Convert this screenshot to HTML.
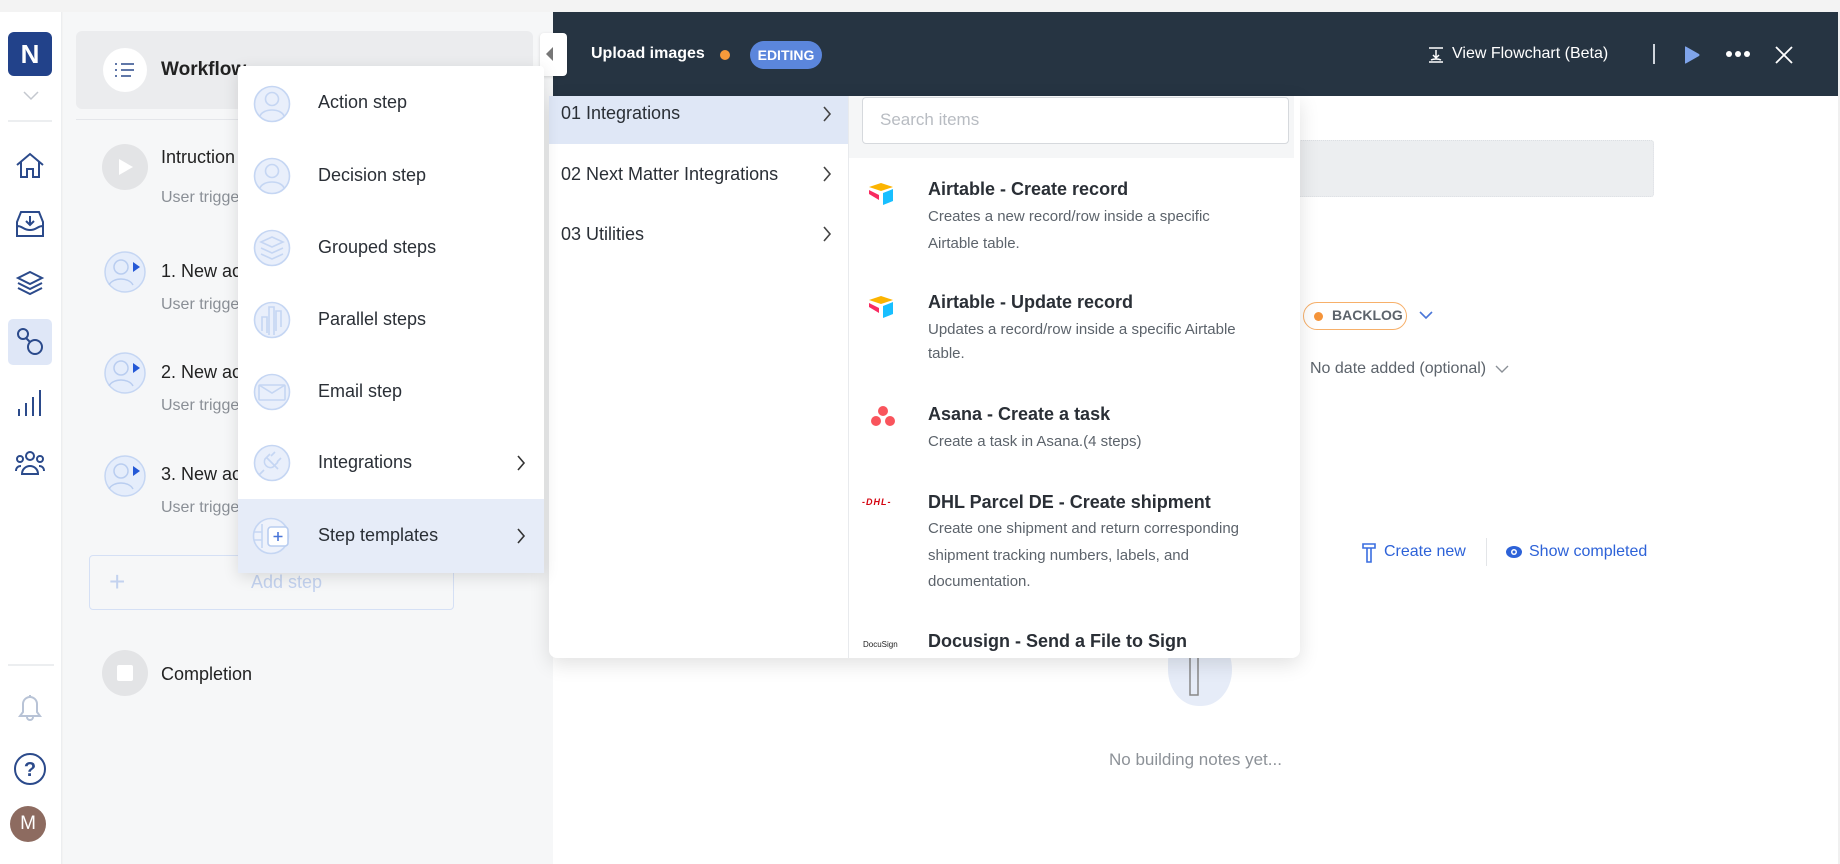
<!DOCTYPE html>
<html><head><meta charset="utf-8"><style>
*{box-sizing:border-box;margin:0;padding:0}
body{width:1840px;height:864px;overflow:hidden;background:#f3f3f3;font-family:"Liberation Sans",Arial,sans-serif;position:relative;color:#2a2f36}
.a{position:absolute}
.t{position:absolute;white-space:nowrap}
</style></head><body>
<!-- sidebar -->
<div class="a" style="left:0;top:12px;width:62px;height:852px;background:#fff;border-right:1px solid #eceef0"></div>
<div class="a" style="left:8px;top:32px;width:44px;height:44px;border-radius:6px;background:#22428a;color:#fff;font-weight:bold;font-size:26px;text-align:center;line-height:44px">N</div>
<svg class="a" style="left:22px;top:90px" width="18" height="12"><path d="M2 2l7 7 7-7" stroke="#c4c8cf" stroke-width="1.5" fill="none"/></svg>
<div class="a" style="left:8px;top:120px;width:44px;height:2px;background:#eceef0"></div>
<svg class="a" style="left:14px;top:150px" width="32" height="32" fill="none" stroke="#2b4a8b" stroke-width="2"><path d="M3 15L16 4l13 11M7 12v15h6v-8h6v8h6V12"/></svg>
<svg class="a" style="left:14px;top:208px" width="32" height="32" fill="none" stroke="#2b4a8b" stroke-width="2"><path d="M3 28V14l4-10h18l4 10v14zM3 18c6 0 6 4 13 4s7-4 13-4M16 8v9M12 13l4 4 4-4"/></svg>
<svg class="a" style="left:14px;top:267px" width="32" height="32" fill="none" stroke="#2b4a8b" stroke-width="2"><path d="M16 5l12 6-12 6-12-6zM4 16l12 6 12-6M4 21l12 6 12-6"/></svg>
<div class="a" style="left:8px;top:319px;width:44px;height:46px;border-radius:5px;background:#dfe7f7"></div>
<svg class="a" style="left:14px;top:325px" width="32" height="34" fill="none" stroke="#2b4a8b" stroke-width="2"><circle cx="9" cy="9" r="5"/><circle cx="21" cy="22" r="7"/><path d="M12 13l4 4"/></svg>
<svg class="a" style="left:16px;top:388px" width="28" height="30" fill="none" stroke="#2b4a8b" stroke-width="2"><path d="M3 28v-7M10 28V15M17 28V9M24 28V2"/></svg>
<svg class="a" style="left:13px;top:450px" width="34" height="26" fill="none" stroke="#2b4a8b" stroke-width="2"><circle cx="17" cy="6" r="4"/><circle cx="7" cy="9" r="3"/><circle cx="27" cy="9" r="3"/><path d="M9 24c0-5 4-8 8-8s8 3 8 8zM3 21c0-3 2-5 5-5M31 21c0-3-2-5-5-5"/></svg>
<div class="a" style="left:8px;top:664px;width:46px;height:2px;background:#eceef0"></div>
<svg class="a" style="left:16px;top:692px" width="28" height="32" fill="none" stroke="#b8c3d6" stroke-width="2"><path d="M4 24h20l-3-4V12a7 7 0 0 0-14 0v8zM11 25a3 3 0 0 0 6 0M14 3v2"/></svg>
<svg class="a" style="left:13px;top:752px" width="34" height="34" fill="none" stroke="#2b4a8b" stroke-width="2"><circle cx="17" cy="17" r="15"/><text x="17" y="24" font-size="20" font-weight="bold" fill="#2b4a8b" stroke="none" text-anchor="middle" font-family="Liberation Sans">?</text></svg>
<div class="a" style="left:10px;top:806px;width:36px;height:36px;border-radius:50%;background:#8d6b60;color:#fff;font-size:19px;text-align:center;line-height:36px">M</div>

<!-- left panel -->
<div class="a" style="left:63px;top:12px;width:490px;height:852px;background:#f6f7f8"></div>
<div class="a" style="left:76px;top:31px;width:457px;height:78px;border-radius:6px;background:#ebecee"></div>
<div class="a" style="left:76px;top:119px;width:457px;height:1px;background:#e4e6ea"></div>
<div class="a" style="left:103px;top:48px;width:44px;height:44px;border-radius:50%;background:#fff"></div>
<svg class="a" style="left:114px;top:61px" width="22" height="18" fill="none" stroke="#2b4a8b" stroke-width="1.6"><path d="M1 3h2M7 3h13M1 9h2M7 9h13M1 15h2M7 15h10"/></svg>
<div class="t" style="left:161px;top:59px;font-size:19px;font-weight:bold;color:#222">Workflow</div>

<div class="a" style="left:102px;top:144px;width:46px;height:46px;border-radius:50%;background:#e3e4e6"></div>
<svg class="a" style="left:117px;top:157px" width="18" height="20"><path d="M2 2l14 8-14 8z" fill="#fff"/></svg>
<div class="t" style="left:161px;top:147px;font-size:18px;color:#222">Intruction</div>
<div class="t" style="left:161px;top:189px;font-size:16px;color:#8a8f96">User trigge</div>

<svg class="a" style="left:104px;top:251px" width="44" height="44"><circle cx="21" cy="21" r="20" fill="#e5edfb" stroke="#c5d6f3" stroke-width="1.5"/><circle cx="17" cy="16" r="7" fill="none" stroke="#b9cdf0" stroke-width="1.5"/><path d="M5 34c4-8 20-8 24 0" fill="none" stroke="#b9cdf0" stroke-width="1.5"/><path d="M29 11l7 5-7 5z" fill="#2458d6"/></svg>
<div class="t" style="left:161px;top:261px;font-size:18px;color:#222">1. New ac</div>
<div class="t" style="left:161px;top:296px;font-size:16px;color:#8a8f96">User trigge</div>
<svg class="a" style="left:104px;top:352px" width="44" height="44"><circle cx="21" cy="21" r="20" fill="#e5edfb" stroke="#c5d6f3" stroke-width="1.5"/><circle cx="17" cy="16" r="7" fill="none" stroke="#b9cdf0" stroke-width="1.5"/><path d="M5 34c4-8 20-8 24 0" fill="none" stroke="#b9cdf0" stroke-width="1.5"/><path d="M29 11l7 5-7 5z" fill="#2458d6"/></svg>
<div class="t" style="left:161px;top:362px;font-size:18px;color:#222">2. New ac</div>
<div class="t" style="left:161px;top:397px;font-size:16px;color:#8a8f96">User trigge</div>
<svg class="a" style="left:104px;top:455px" width="44" height="44"><circle cx="21" cy="21" r="20" fill="#e5edfb" stroke="#c5d6f3" stroke-width="1.5"/><circle cx="17" cy="16" r="7" fill="none" stroke="#b9cdf0" stroke-width="1.5"/><path d="M5 34c4-8 20-8 24 0" fill="none" stroke="#b9cdf0" stroke-width="1.5"/><path d="M29 11l7 5-7 5z" fill="#2458d6"/></svg>
<div class="t" style="left:161px;top:464px;font-size:18px;color:#222">3. New ac</div>
<div class="t" style="left:161px;top:499px;font-size:16px;color:#8a8f96">User trigge</div>

<div class="a" style="left:89px;top:555px;width:365px;height:55px;border:1.5px solid #d5e0f5;border-radius:4px"></div>
<div class="t" style="left:109px;top:566px;font-size:28px;color:#c3d2ef;font-weight:300">+</div>
<div class="t" style="left:251px;top:572px;font-size:18px;color:#c3d2ef">Add step</div>

<div class="a" style="left:102px;top:650px;width:46px;height:46px;border-radius:50%;background:#e3e4e6"></div>
<div class="a" style="left:117px;top:665px;width:16px;height:16px;border-radius:2px;background:#fff"></div>
<div class="t" style="left:161px;top:664px;font-size:18px;color:#222">Completion</div>

<!-- header -->
<div class="a" style="left:553px;top:12px;width:1285px;height:84px;background:#263442"></div>
<div class="a" style="left:553px;top:96px;width:1285px;height:768px;background:#fff"></div>
<div class="a" style="left:1838px;top:12px;width:2px;height:852px;background:#f0f0f0"></div>
<div class="a" style="left:540px;top:33px;width:27px;height:43px;background:#fff;border-radius:4px;box-shadow:0 1px 3px rgba(0,0,0,.15)"></div>
<svg class="a" style="left:545px;top:46px" width="10" height="16"><path d="M8 1L1 8l7 7z" fill="#777"/></svg>
<div class="t" style="left:591px;top:45px;font-size:16px;font-weight:bold;color:#fff">Upload images</div>
<div class="a" style="left:720px;top:50px;width:10px;height:10px;border-radius:50%;background:#f59a3b"></div>
<div class="a" style="left:750px;top:41px;width:72px;height:28px;border-radius:14px;background:#5b86dc;color:#fff;font-size:14px;font-weight:bold;text-align:center;line-height:28px">EDITING</div>
<svg class="a" style="left:1427px;top:46px" width="18" height="18" fill="none" stroke="#fff" stroke-width="1.5"><path d="M2 2h14M2 16h14M9 4v8M6 9l3 3 3-3M4 14c2-1 3-1 5-1s3 0 5 1"/></svg>
<div class="t" style="left:1452px;top:45px;font-size:16px;color:#fff">View Flowchart (Beta)</div>
<div class="a" style="left:1653px;top:44px;width:2px;height:20px;background:#cfd5dc"></div>
<svg class="a" style="left:1683px;top:46px" width="18" height="18"><path d="M2 1q0-1 1-.4l13 7.4q1 1 0 2L3 17.4q-1 .6-1-.4z" fill="#7fa4ea"/></svg>
<div class="a" style="left:1726px;top:51px;width:6px;height:6px;border-radius:50%;background:#fff"></div>
<div class="a" style="left:1735px;top:51px;width:6px;height:6px;border-radius:50%;background:#fff"></div>
<div class="a" style="left:1744px;top:51px;width:6px;height:6px;border-radius:50%;background:#fff"></div>
<svg class="a" style="left:1774px;top:45px" width="20" height="20" stroke="#fff" stroke-width="1.8"><path d="M2 2l16 16M18 2L2 18"/></svg>

<!-- main content -->
<div class="a" style="left:1200px;top:140px;width:454px;height:57px;background:#eceef0;border:1px dotted #dcdfe3;border-radius:3px"></div>
<div class="a" style="left:1303px;top:302px;width:104px;height:28px;border:1.5px solid #f7b06a;border-radius:14px"></div>
<div class="a" style="left:1314px;top:312px;width:9px;height:9px;border-radius:50%;background:#f5943a"></div>
<div class="t" style="left:1332px;top:307px;font-size:14px;font-weight:bold;color:#5c636b">BACKLOG</div>
<svg class="a" style="left:1418px;top:310px" width="16" height="10" fill="none" stroke="#4a76d8" stroke-width="1.6"><path d="M2 2l6 6 6-6"/></svg>
<div class="t" style="left:1310px;top:360px;font-size:16px;color:#5c636b">No date added (optional)</div>
<svg class="a" style="left:1494px;top:364px" width="16" height="10" fill="none" stroke="#8a8f96" stroke-width="1.4"><path d="M2 2l6 6 6-6"/></svg>
<svg class="a" style="left:1362px;top:542px" width="14" height="22" fill="none" stroke="#3a6ee0" stroke-width="1.6"><path d="M1 2h12v4H1zM5 6v14h4V6"/></svg>
<div class="t" style="left:1384px;top:543px;font-size:16px;color:#2d62d8">Create new</div>
<div class="a" style="left:1486px;top:538px;width:1px;height:28px;background:#e3e5e8"></div>
<svg class="a" style="left:1505px;top:545px" width="18" height="14"><ellipse cx="9" cy="7" rx="8" ry="6" fill="#2d62d8"/><circle cx="9" cy="7" r="3" fill="#fff"/><circle cx="9" cy="7" r="1.5" fill="#2d62d8"/></svg>
<div class="t" style="left:1529px;top:543px;font-size:16px;color:#2d62d8">Show completed</div>
<div class="a" style="left:1168px;top:630px;width:64px;height:76px;border-radius:45% 55% 50% 50%;background:#e6ecf8"></div>
<svg class="a" style="left:1184px;top:655px" width="20" height="42" fill="none" stroke="#888" stroke-width="1.5"><path d="M6 0v40h8V0"/></svg>
<div class="t" style="left:1109px;top:750px;font-size:17px;color:#8d9298">No building notes yet...</div>

<!-- integrations dropdown -->
<div class="a" style="left:549px;top:96px;width:751px;height:562px;background:#fff;border-radius:0 0 8px 8px;box-shadow:0 6px 20px rgba(0,0,0,.12)"></div>
<div class="a" style="left:549px;top:96px;width:299px;height:48px;background:#dfe7f6"></div>
<div class="a" style="left:848px;top:96px;width:1px;height:562px;background:#e8eaed"></div>
<div class="t" style="left:561px;top:103px;font-size:18px;color:#2a2f36">01 Integrations</div>
<div class="t" style="left:561px;top:164px;font-size:18px;color:#2a2f36">02 Next Matter Integrations</div>
<div class="t" style="left:561px;top:224px;font-size:18px;color:#2a2f36">03 Utilities</div>
<svg class="a" style="left:822px;top:105px" width="10" height="18" fill="none" stroke="#444" stroke-width="1.6"><path d="M2 2l6 7-6 7"/></svg>
<svg class="a" style="left:822px;top:165px" width="10" height="18" fill="none" stroke="#444" stroke-width="1.6"><path d="M2 2l6 7-6 7"/></svg>
<svg class="a" style="left:822px;top:225px" width="10" height="18" fill="none" stroke="#444" stroke-width="1.6"><path d="M2 2l6 7-6 7"/></svg>
<div class="a" style="left:849px;top:96px;width:445px;height:62px;background:#f5f6f7"></div>
<div class="a" style="left:862px;top:97px;width:427px;height:47px;background:#fff;border:1px solid #d6d9dd;border-radius:4px"></div>
<div class="t" style="left:880px;top:110px;font-size:17px;color:#b8bcc2">Search items</div>

<svg class="a" style="left:868px;top:182px" width="28" height="24"><path d="M13 1l12 4-12 4L1 5z" fill="#fcb400"/><path d="M15 11l10-4v12l-10 4z" fill="#18bfff"/><path d="M1 8l10 5v5L1 12z" fill="#f82b60"/></svg>
<div class="t" style="left:928px;top:179px;font-size:18px;font-weight:bold;color:#2a2f36">Airtable - Create record</div>
<div class="t" style="left:928px;top:208px;font-size:15px;color:#5c636b">Creates a new record/row inside a specific</div>
<div class="t" style="left:928px;top:235px;font-size:15px;color:#5c636b">Airtable table.</div>
<svg class="a" style="left:868px;top:295px" width="28" height="24"><path d="M13 1l12 4-12 4L1 5z" fill="#fcb400"/><path d="M15 11l10-4v12l-10 4z" fill="#18bfff"/><path d="M1 8l10 5v5L1 12z" fill="#f82b60"/></svg>
<div class="t" style="left:928px;top:292px;font-size:18px;font-weight:bold;color:#2a2f36">Airtable - Update record</div>
<div class="t" style="left:928px;top:321px;font-size:15px;color:#5c636b">Updates a record/row inside a specific Airtable</div>
<div class="t" style="left:928px;top:345px;font-size:15px;color:#5c636b">table.</div>
<svg class="a" style="left:870px;top:405px" width="26" height="24"><circle cx="13" cy="6" r="5" fill="#f9545c"/><circle cx="6" cy="16" r="5" fill="#f9545c"/><circle cx="20" cy="16" r="5" fill="#f9545c"/></svg>
<div class="t" style="left:928px;top:404px;font-size:18px;font-weight:bold;color:#2a2f36">Asana - Create a task</div>
<div class="t" style="left:928px;top:433px;font-size:15px;color:#5c636b">Create a task in Asana.(4 steps)</div>
<div class="t" style="left:862px;top:497px;font-size:9px;font-weight:bold;font-style:italic;color:#d40511;letter-spacing:1px">-DHL-</div>
<div class="t" style="left:928px;top:492px;font-size:18px;font-weight:bold;color:#2a2f36">DHL Parcel DE - Create shipment</div>
<div class="t" style="left:928px;top:520px;font-size:15px;color:#5c636b">Create one shipment and return corresponding</div>
<div class="t" style="left:928px;top:547px;font-size:15px;color:#5c636b">shipment tracking numbers, labels, and</div>
<div class="t" style="left:928px;top:573px;font-size:15px;color:#5c636b">documentation.</div>
<div class="t" style="left:863px;top:640px;font-size:8px;color:#222">DocuSign</div>
<div class="t" style="left:928px;top:631px;font-size:18px;font-weight:bold;color:#2a2f36">Docusign - Send a File to Sign</div>

<!-- step type menu -->
<div class="a" style="left:238px;top:66px;width:306px;height:507px;background:#fff;border-radius:4px;box-shadow:0 4px 16px rgba(0,0,0,.12)"></div>
<div class="a" style="left:238px;top:499px;width:306px;height:74px;background:#e6ecf8"></div>
<svg class="a" style="left:253px;top:85px" width="38" height="38" fill="none" stroke="#c5d6f3" stroke-width="1.6"><circle cx="19" cy="19" r="17.5" fill="#e9effb"/><circle cx="19" cy="14" r="6.5"/><path d="M7 31c3-8 21-8 24 0"/></svg>
<div class="t" style="left:318px;top:92px;font-size:18px;color:#2a2f36">Action step</div>
<svg class="a" style="left:253px;top:157px" width="38" height="38" fill="none" stroke="#c5d6f3" stroke-width="1.6"><circle cx="19" cy="19" r="17.5" fill="#e9effb"/><circle cx="19" cy="14" r="6.5"/><path d="M7 31c3-8 21-8 24 0"/></svg>
<div class="t" style="left:318px;top:165px;font-size:18px;color:#2a2f36">Decision step</div>
<svg class="a" style="left:253px;top:229px" width="38" height="38" fill="none" stroke="#c5d6f3" stroke-width="1.6"><circle cx="19" cy="19" r="17.5" fill="#e9effb"/><path d="M8 13l11-5 11 5-11 5zM8 19l11 5 11-5M8 25l11 5 11-5"/></svg>
<div class="t" style="left:318px;top:237px;font-size:18px;color:#2a2f36">Grouped steps</div>
<svg class="a" style="left:253px;top:301px" width="38" height="38" fill="none" stroke="#c5d6f3" stroke-width="1.6"><circle cx="19" cy="19" r="17.5" fill="#e9effb"/><path d="M9 30V16h5v16M16 34V6h5v28M23 30V10h5v16"/></svg>
<div class="t" style="left:318px;top:309px;font-size:18px;color:#2a2f36">Parallel steps</div>
<svg class="a" style="left:253px;top:373px" width="38" height="38" fill="none" stroke="#c5d6f3" stroke-width="1.6"><circle cx="19" cy="19" r="17.5" fill="#e9effb"/><rect x="6" y="12" width="26" height="15" rx="1"/><path d="M6 12l13 8 13-8"/></svg>
<div class="t" style="left:318px;top:381px;font-size:18px;color:#2a2f36">Email step</div>
<svg class="a" style="left:253px;top:444px" width="38" height="38" fill="none" stroke="#c5d6f3" stroke-width="1.6"><circle cx="19" cy="19" r="17.5" fill="#e9effb"/><path d="M13 13l12 12M17 10l-5 5a6 6 0 0 0 8 8l5-5M22 8l-4 4M28 14l-4 4M11 26l-5 5"/></svg>
<div class="t" style="left:318px;top:452px;font-size:18px;color:#2a2f36">Integrations</div>
<svg class="a" style="left:516px;top:454px" width="10" height="18" fill="none" stroke="#333" stroke-width="1.6"><path d="M2 2l6 7-6 7"/></svg>
<svg class="a" style="left:252px;top:516px" width="40" height="40" fill="none" stroke="#c5d6f3" stroke-width="1.6"><circle cx="19" cy="20" r="17.5" fill="#eef2fb"/><path d="M2 16h8M2 24h8M10 8v24"/><rect x="16" y="11" width="20" height="19" rx="3" fill="#fff" stroke="#b9cdf0"/><path d="M26 16v9M21.5 20.5h9" stroke="#4a76d8"/></svg>
<div class="t" style="left:318px;top:525px;font-size:18px;color:#2a2f36">Step templates</div>
<svg class="a" style="left:516px;top:527px" width="10" height="18" fill="none" stroke="#333" stroke-width="1.6"><path d="M2 2l6 7-6 7"/></svg>
</body></html>
